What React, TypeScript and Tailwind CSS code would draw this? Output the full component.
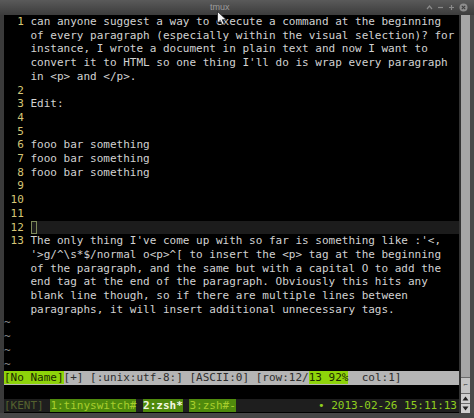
import React from "react";

const ROW = "h-[13.71px] leading-[13.71px] whitespace-pre";

const textRows: { num: string; text: string }[] = [
  { num: "  1 ", text: "can anyone suggest a way to execute a command at the beginning" },
  { num: "    ", text: "of every paragraph (especially within the visual selection)? for" },
  { num: "    ", text: "instance, I wrote a document in plain text and now I want to" },
  { num: "    ", text: "convert it to HTML so one thing I'll do is wrap every paragraph" },
  { num: "    ", text: "in <p> and </p>." },
  { num: "  2 ", text: "" },
  { num: "  3 ", text: "Edit:" },
  { num: "  4 ", text: "" },
  { num: "  5 ", text: "" },
  { num: "  6 ", text: "fooo bar something" },
  { num: "  7 ", text: "fooo bar something" },
  { num: "  8 ", text: "fooo bar something" },
  { num: "  9 ", text: "" },
  { num: " 10 ", text: "" },
  { num: " 11 ", text: "" },
];

const afterRows: { num: string; text: string }[] = [
  { num: " 13 ", text: "The only thing I've come up with so far is something like :'<," },
  { num: "    ", text: "'>g/^\\s*$/normal o<p>^[ to insert the <p> tag at the beginning" },
  { num: "    ", text: "of the paragraph, and the same but with a capital O to add the" },
  { num: "    ", text: "end tag at the end of the paragraph. Obviously this hits any" },
  { num: "    ", text: "blank line though, so if there are multiple lines between" },
  { num: "    ", text: "paragraphs, it will insert additional unnecessary tags." },
];

function Line({ num, text }: { num: string; text: string }) {
  return (
    <div className={ROW}>
      <span className="text-[#d6c676]">{num}</span>
      <span className="text-[#d2d2d2]">{text}</span>
    </div>
  );
}

export default function App() {
  return (
    <div className="relative w-[474px] h-[418px] bg-[#474747] flex flex-col overflow-hidden font-['DejaVu_Sans_Mono',monospace] text-[11px]">
      {/* title bar */}
      <div className="h-[15px] flex items-center bg-gradient-to-b from-[#5a5a5a] to-[#3c3c3c] font-['Liberation_Sans',sans-serif] text-[9px] text-[#9c9c9c]">
        <span className="ml-[210px]">tmux</span>
        <div className="ml-auto mr-[6px] flex items-center gap-[4px]">
          <svg width="7" height="7" viewBox="0 0 7 7">
            <path d="M1 5 L3.5 2 L6 5" stroke="#8a8a8a" strokeWidth="1.2" fill="none" />
          </svg>
          <svg width="7" height="7" viewBox="0 0 7 7">
            <path d="M1 3.5 H6" stroke="#8a8a8a" strokeWidth="1.2" />
          </svg>
          <svg width="7" height="7" viewBox="0 0 7 7">
            <path d="M1 3.5 H6 M3.5 1 V6" stroke="#8a8a8a" strokeWidth="1.2" />
          </svg>
          <svg width="9" height="9" viewBox="0 0 9 9">
            <circle cx="4.5" cy="4.5" r="4" fill="#8d8d8d" />
            <path d="M2.8 2.8 L6.2 6.2 M6.2 2.8 L2.8 6.2" stroke="#3c3c3c" strokeWidth="1.1" />
          </svg>
        </div>
      </div>

      <div className="flex flex-1">
        <div className="w-[4px] bg-[#3a3a3a]" />
        {/* terminal */}
        <div className="w-[455px] bg-black flex flex-col">
          {textRows.map((r, i) => (
            <Line key={i} num={r.num} text={r.text} />
          ))}
          <div className={`${ROW} flex`}>
            <span className="text-[#d6c676]">{" 12 "}</span>
            <div className="flex-1 bg-[#1c1c1c] flex items-center">
              <div className="w-[6.6px] h-[13px] border border-[#7d8a5a]" />
            </div>
          </div>
          {afterRows.map((r, i) => (
            <Line key={i} num={r.num} text={r.text} />
          ))}
          {[0, 1, 2, 3].map((i) => (
            <div key={i} className={`${ROW} text-[#8a8a8a]`}>
              ~
            </div>
          ))}
          {/* vim status line */}
          <div className={`${ROW} bg-[#b5b5b5] text-[#2e2e2e]`}>
            <span className="bg-[#8ed40a] text-[#1c2a00]">[No Name]</span>
            <span>{"[+] [:unix:utf-8:] [ASCII:0] [row:12/"}</span>
            <span className="bg-[#8ed40a] text-[#1c2a00]">13 92%</span>
            <span>{"  col:1]"}</span>
          </div>
          <div className={ROW} />
          {/* tmux bar */}
          <div className={`${ROW} bg-[#1e1e1e] flex`}>
            <span className="text-[#55612e]">[KENT]</span>
            <span>{" "}</span>
            <span className="bg-[#4f8a0c] text-[#a9cf2c]">1:tinyswitch#</span>
            <span>{" "}</span>
            <span className="bg-[#4f8a0c] text-[#f2f7e0] font-bold">2:zsh*</span>
            <span>{" "}</span>
            <span className="bg-[#4f8a0c] text-[#a9cf2c]">3:zsh#-</span>
            <span className="ml-auto mr-[2px] text-[#8fcf1e]">{"• 2013-02-26 15:11:13"}</span>
          </div>
        </div>
        {/* scrollbar */}
        <div className="w-[2px] bg-[#333333]" />
        <div className="w-[9px] bg-[#a6a6a6] flex flex-col">
          <div className="flex-1" />
          <div className="h-[16px] border-t border-[#6a6a6a] bg-[#c4c4c4] flex items-center justify-center text-[7px] text-[#555]">
            ⌐
          </div>
          <div className="h-[10px] border-t border-[#6a6a6a] bg-[#cfcfcf] flex items-center justify-center">
            <svg width="7" height="5" viewBox="0 0 7 5">
              <path d="M0.5 4.5 L3.5 0.5 L6.5 4.5 Z" fill="#222" />
            </svg>
          </div>
          <div className="h-[10px] border-t border-[#6a6a6a] bg-[#cfcfcf] flex items-center justify-center">
            <svg width="7" height="5" viewBox="0 0 7 5">
              <path d="M0.5 0.5 L3.5 4.5 L6.5 0.5 Z" fill="#222" />
            </svg>
          </div>
        </div>
        <div className="w-[4px] bg-[#4a4a4a]" />
      </div>
      <div className="h-[5px] bg-[#474747]" />

      {/* mouse pointer */}
      <svg className="absolute left-[217px] top-[11px]" width="11" height="15" viewBox="0 0 11 15">
        <path d="M0.5 0.5 L0.5 12 L3.3 9.4 L5.3 13.8 L7.2 13 L5.3 8.7 L9.3 8.7 Z" fill="#f4f4f4" stroke="#222" strokeWidth="0.8" />
      </svg>
    </div>
  );
}
